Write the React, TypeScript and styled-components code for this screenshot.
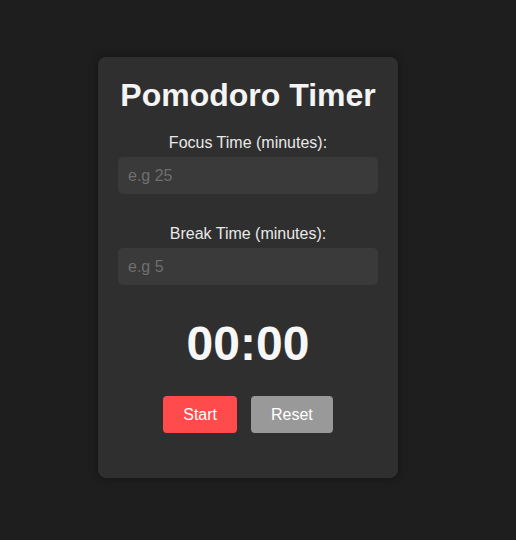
import styled, { createGlobalStyle } from "styled-components";

const GlobalStyle = createGlobalStyle`
  html, body {
    margin: 0;
    padding: 0;
    background: #1e1e1e;
    font-family: "Liberation Sans", Arial, sans-serif;
  }
  * { box-sizing: border-box; }
`;

export default function App() {
  return (
    <>
      <GlobalStyle />
      <Page>
        <Card>
          <Title>Pomodoro Timer</Title>
          <Field>
            <Label htmlFor="focus">Focus Time (minutes):</Label>
            <Input id="focus" type="number" placeholder="e.g 25" />
          </Field>
          <Field>
            <Label htmlFor="break">Break Time (minutes):</Label>
            <Input id="break" type="number" placeholder="e.g 5" />
          </Field>
          <Clock>00:00</Clock>
          <Controls>
            <Button $variant="start">Start</Button>
            <Button $variant="reset">Reset</Button>
          </Controls>
        </Card>
      </Page>
    </>
  );
}

const Page = styled.div`
  min-height: 540px;
  display: flex;
  justify-content: center;
  align-items: flex-start;
  padding: 57px 20px 0 0;
`;
const Card = styled.div`
  width: 300px;
  background: #2f2f2f;
  border-radius: 8px;
  padding: 20px 20px 45px;
  box-shadow: 0 0 10px rgba(0, 0, 0, 0.35);
  display: flex;
  flex-direction: column;
  align-items: center;
  color: #f2f2f2;
`;
const Title = styled.h1`
  margin: 0 0 20px;
  font-size: 32px;
  line-height: 37px;
  font-weight: bold;
  color: #f4f4f4;
`;
const Field = styled.div`
  width: 100%;
  display: flex;
  flex-direction: column;
  align-items: center;
  gap: 5px;
  margin-bottom: 31px;
`;
const Label = styled.label`
  font-size: 16px;
  line-height: 18px;
  color: #e8e8e8;
`;
const Input = styled.input`
  width: 100%;
  height: 37px;
  padding: 0 10px;
  border: none;
  outline: none;
  border-radius: 5px;
  background: #3a3a3a;
  color: #eee;
  font-family: "Liberation Sans", Arial, sans-serif;
  font-size: 16px;
  &::placeholder {
    color: #6f6f6f;
  }
  &::-webkit-inner-spin-button,
  &::-webkit-outer-spin-button {
    -webkit-appearance: none;
    margin: 0;
  }
`;
const Clock = styled.div`
  font-size: 48px;
  line-height: 55px;
  font-weight: bold;
  color: #f7f7f7;
  margin-bottom: 25px;
`;
const Controls = styled.div`
  display: flex;
  gap: 14px;
`;
const Button = styled.button<{ $variant: "start" | "reset" }>`
  height: 37px;
  padding: 0 20px;
  border: none;
  border-radius: 4px;
  font-family: "Liberation Sans", Arial, sans-serif;
  font-size: 16px;
  color: #fff;
  cursor: pointer;
  background: ${(p) => (p.$variant === "start" ? "#ff4b4b" : "#999999")};
`;
